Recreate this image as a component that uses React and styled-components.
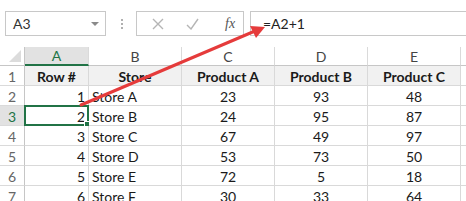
import React from "react"
import styled, { createGlobalStyle } from "styled-components"

const GlobalStyle = createGlobalStyle`
  html, body {
    margin: 0;
    padding: 0;
    background: #fff;
    width: 466px;
    height: 201px;
    overflow: hidden;
  }
  * { box-sizing: border-box; }
`

const Page = styled.div`
  position: relative;
  width: 466px;
  height: 201px;
  overflow: hidden;
  background: #fff;
  font-family: Lato, "Liberation Sans", sans-serif;
  color: #222;
`

const Toolbar = styled.div`
  display: flex;
  align-items: center;
  height: 25px;
  margin-top: 11px;
  padding-left: 5px;
`

const NameBox = styled.div`
  display: flex;
  align-items: center;
  justify-content: space-between;
  width: 101px;
  height: 25px;
  border: 1px solid #c8c8c8;
  padding: 0 6px 0 7px;
  font-size: 14px;
  color: #333;
`

const DropArrow = styled.span`
  width: 0;
  height: 0;
  border-left: 4px solid transparent;
  border-right: 4px solid transparent;
  border-top: 4px solid #8a8a8a;
`

const Grip = styled.div`
  display: flex;
  flex-direction: column;
  gap: 2px;
  margin: 0 13px 0 15px;
  span {
    width: 2px;
    height: 2px;
    background: #b0b0b0;
  }
`

const FxBox = styled.div`
  display: flex;
  align-items: center;
  width: 108px;
  height: 25px;
  border: 1px solid #c8c8c8;
  padding-left: 15px;
  gap: 22px;
`

const FxLabel = styled.span`
  font-family: "Liberation Serif", serif;
  font-style: italic;
  font-size: 14px;
  color: #555;
  margin-left: 4px;
`

const FormulaBox = styled.div`
  display: flex;
  align-items: center;
  flex: 1;
  height: 25px;
  margin-left: 6px;
  border: 1px solid #c8c8c8;
  border-right: none;
  padding-left: 12px;
  font-size: 14px;
  color: #222;
`

const Sheet = styled.div`
  display: grid;
  grid-template-columns: 25px 64px 93px 93px 93px 93px 1fr;
  grid-template-rows: 19px repeat(7, 20px);
  margin-top: 11px;
`

const Cell = styled.div`
  position: relative;
  display: flex;
  align-items: center;
  justify-content: ${p => p.$align === "right" ? "flex-end" : p.$align === "left" ? "flex-start" : "center"};
  padding: 1px 3px 0;
  border-right: 1px solid #d9d9d9;
  border-bottom: 1px solid #d9d9d9;
  font-size: 14px;
  font-weight: ${p => (p.$bold ? 700 : 400)};
  background: ${p => (p.$bold ? "#f1f1f1" : "#fff")};
  color: #1a1a1a;
  white-space: nowrap;
`

const Selected = styled.span`
  position: absolute;
  left: -1px;
  top: -1px;
  right: -1px;
  bottom: -1px;
  border: 2px solid #217346;
  &::after {
    content: "";
    position: absolute;
    right: -4px;
    bottom: -4px;
    width: 5px;
    height: 5px;
    background: #217346;
    border: 1px solid #fff;
  }
`

const ColHead = styled.div`
  display: flex;
  align-items: center;
  justify-content: center;
  border-right: 1px solid #dadada;
  border-bottom: ${p => (p.$active ? "2px solid #217346" : "1px solid #c6c6c6")};
  background: ${p => (p.$active ? "#e2e2e2" : "#fff")};
  color: ${p => (p.$active ? "#217346" : "#444")};
  font-size: 14px;
`

const Corner = styled.div`
  position: relative;
  border-right: 1px solid #c6c6c6;
  border-bottom: 1px solid #c6c6c6;
  &::after {
    content: "";
    position: absolute;
    right: 3px;
    bottom: 3px;
    border-left: 12px solid transparent;
    border-bottom: 12px solid #dcdcdc;
  }
`

const RowHead = styled.div`
  display: flex;
  align-items: center;
  justify-content: center;
  padding-top: 1px;
  border-right: 1px solid #c6c6c6;
  border-bottom: 1px solid #dadada;
  background: ${p => (p.$active ? "#e2e2e2" : "#fff")};
  color: ${p => (p.$active ? "#217346" : "#666")};
  font-size: 14px;
`

const Arrow = styled.svg`
  position: absolute;
  left: 0;
  top: 0;
  pointer-events: none;
`

const cols = ["A", "B", "C", "D", "E", ""]
const headers = ["Row #", "Store", "Product A", "Product B", "Product C"]
const rows = [
  [1, "Store A", 23, 93, 48],
  [2, "Store B", 24, 95, 87],
  [3, "Store C", 67, 49, 97],
  [4, "Store D", 53, 73, 50],
  [5, "Store E", 72, 5, 18],
  [6, "Store F", 30, 33, 64],
]

export default function App() {
  return (
    <Page>
      <GlobalStyle />
      <Toolbar>
        <NameBox>
          A3
          <DropArrow />
        </NameBox>
        <Grip>
          <span />
          <span />
          <span />
        </Grip>
        <FxBox>
          <svg width="12" height="12" viewBox="0 0 12 12">
            <path d="M1 1 L11 11 M11 1 L1 11" stroke="#b5b5b5" strokeWidth="1.4" />
          </svg>
          <svg width="13" height="12" viewBox="0 0 13 12">
            <path d="M1 7 L5 11 L12 1" stroke="#b5b5b5" strokeWidth="1.4" fill="none" />
          </svg>
          <FxLabel>fx</FxLabel>
        </FxBox>
        <FormulaBox>=A2+1</FormulaBox>
      </Toolbar>

      <Sheet>
        <Corner />
        {cols.map((c, i) => (
          <ColHead key={i} $active={c === "A"}>{c}</ColHead>
        ))}

        <RowHead>1</RowHead>
        {headers.map(h => (
          <Cell key={h} $bold>{h}</Cell>
        ))}
        <Cell />

        {rows.map((r, i) => (
          <React.Fragment key={i}>
            <RowHead $active={i === 1}>{i + 2}</RowHead>
            <Cell $align="right">
              {r[0]}
              {i === 1 && <Selected />}
            </Cell>
            <Cell $align="left">{r[1]}</Cell>
            <Cell>{r[2]}</Cell>
            <Cell>{r[3]}</Cell>
            <Cell>{r[4]}</Cell>
            <Cell />
          </React.Fragment>
        ))}
      </Sheet>

      <Arrow width="466" height="201" viewBox="0 0 466 201">
        <line x1="81" y1="105" x2="255" y2="31" stroke="#e53b3b" strokeWidth="3" strokeLinecap="round" />
        <polygon points="265,27 250,26 256,38" fill="#e53b3b" />
      </Arrow>
    </Page>
  )
}
